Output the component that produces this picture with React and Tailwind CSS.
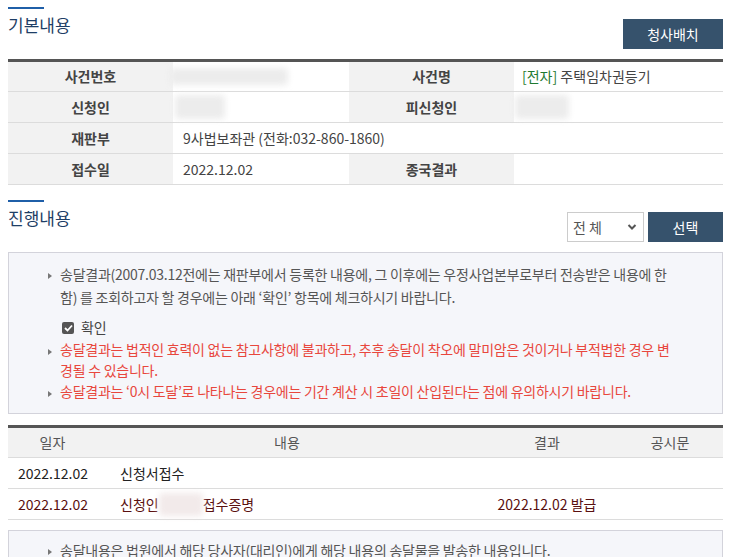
import React from 'react';

const Blur = ({ className }) => (
  <div className={`bg-[#ececec] blur-[3px] rounded ${className}`} />
);

const Bullet = () => (
  <span className="mt-[10px] mr-[8px] shrink-0 inline-block w-0 h-0 border-y-[3px] border-y-transparent border-l-[4px] border-l-[#777]" />
);

const SectionHead = ({ title, children }) => (
  <div className="flex justify-between items-start">
    <div>
      <div className="w-[36px] h-[2px] bg-[#1f5fa8]" />
      <h2 className="mt-[4px] text-[17px] leading-[24px] text-[#1e3e66]">{title}</h2>
    </div>
    <div className="mt-[12px] flex gap-[4px]">{children}</div>
  </div>
);

const Label = ({ children }) => (
  <td className="w-[165px] bg-[#f2f2f2] text-center font-bold text-[#444]">{children}</td>
);

export default function App() {
  return (
    <div className="bg-white min-h-[557px] overflow-hidden font-['Noto_Sans_CJK_KR',sans-serif] text-[14px] text-[#444]">
      <div className="w-[715px] ml-2 pt-[7px]">
        <SectionHead title="기본내용">
          <button className="w-[100px] h-[30px] bg-[#36526c] text-white text-[14px]">청사배치</button>
        </SectionHead>

        <table className="mt-[10px] w-full border-t-[3px] border-t-[#555] border-collapse">
          <tbody>
            <tr className="h-[31px] border-b border-b-[#dcdcdc]">
              <Label>사건번호</Label>
              <td className="w-[176px] pl-[10px]">
                <Blur className="w-[118px] h-[17px] -ml-[13px]" />
              </td>
              <Label>사건명</Label>
              <td className="pl-[8px]">
                <span className="text-[#1f7a30]">[전자]</span> 주택임차권등기
              </td>
            </tr>
            <tr className="h-[31px] border-b border-b-[#dcdcdc]">
              <Label>신청인</Label>
              <td className="pl-[10px]">
                <Blur className="w-[50px] h-[24px] -ml-[8px]" />
              </td>
              <Label>피신청인</Label>
              <td className="pl-[1px]">
                <Blur className="w-[54px] h-[24px]" />
              </td>
            </tr>
            <tr className="h-[31px] border-b border-b-[#dcdcdc]">
              <Label>재판부</Label>
              <td colSpan={3} className="pl-[10px]">9사법보좌관 (전화:032-860-1860)</td>
            </tr>
            <tr className="h-[31px] border-b border-b-[#dcdcdc]">
              <Label>접수일</Label>
              <td className="pl-[10px]">2022.12.02</td>
              <Label>종국결과</Label>
              <td />
            </tr>
          </tbody>
        </table>

        <div className="mt-[15px]">
          <SectionHead title="진행내용">
            <div className="w-[77px] h-[30px] border border-[#ccc] flex items-center justify-between pl-[5px] pr-[6px] text-[#555]">
              <span>전 체</span>
              <svg width="10" height="8" viewBox="0 0 10 8">
                <path d="M1.5 2 L5 5.5 L8.5 2" stroke="#555" strokeWidth="2" fill="none" />
              </svg>
            </div>
            <button className="w-[75px] h-[30px] bg-[#36526c] text-white text-[14px]">선택</button>
          </SectionHead>
        </div>

        <div className="mt-[10px] border border-[#d3d3db] bg-[#f5f6fa] pt-[10px] pb-[11px] pl-[39px] text-[#555] tracking-[-0.25px]">
          <div className="flex leading-[23px] whitespace-nowrap">
            <Bullet />
            <p>
              송달결과(2007.03.12전에는 재판부에서 등록한 내용에, 그 이후에는 우정사업본부로부터 전송받은 내용에 한
              <br />
              함) 를 조회하고자 할 경우에는 아래 ‘확인’ 항목에 체크하시기 바랍니다.
            </p>
          </div>
          <label className="mt-[7px] ml-[14px] flex items-center gap-[7px] leading-[23px] text-[#444]">
            <span className="w-[12px] h-[12px] rounded-[2px] bg-[#555] flex items-center justify-center">
              <svg width="9" height="8" viewBox="0 0 9 8">
                <path d="M1 4 L3.5 6.5 L8 1.5" stroke="white" strokeWidth="1.8" fill="none" />
              </svg>
            </span>
            확인
          </label>
          <div className="flex leading-[21px] whitespace-nowrap text-[#e8473d]">
            <Bullet />
            <p>
              송달결과는 법적인 효력이 없는 참고사항에 불과하고, 추후 송달이 착오에 말미암은 것이거나 부적법한 경우 변
              <br />
              경될 수 있습니다.
            </p>
          </div>
          <div className="flex leading-[21px] whitespace-nowrap text-[#e8473d]">
            <Bullet />
            <p>송달결과는 ‘0시 도달’로 나타나는 경우에는 기간 계산 시 초일이 산입된다는 점에 유의하시기 바랍니다.</p>
          </div>
        </div>

        <table className="mt-[11px] w-full border-t-[3px] border-t-[#555] border-collapse">
          <thead>
            <tr className="h-[31px] bg-[#f2f2f2] border-b border-b-[#dcdcdc] text-[#555]">
              <th className="w-[89px] font-normal">일자</th>
              <th className="w-[380px] font-normal">내용</th>
              <th className="w-[140px] font-normal">결과</th>
              <th className="font-normal">공시문</th>
            </tr>
          </thead>
          <tbody>
            <tr className="h-[31px] border-b border-b-[#dcdcdc] text-[#222]">
              <td className="pl-[10px]">2022.12.02</td>
              <td className="pl-[23px]">신청서접수</td>
              <td />
              <td />
            </tr>
            <tr className="h-[31px] border-b border-b-[#dcdcdc] text-[#5a1010]">
              <td className="pl-[10px]">2022.12.02</td>
              <td className="pl-[23px]">
                <div className="flex items-center">
                  <span>신청인</span>
                  <Blur className="w-[44px] h-[23px] bg-[#f2eaea]" />
                  <span>접수증명</span>
                </div>
              </td>
              <td className="text-center">2022.12.02 발급</td>
              <td />
            </tr>
          </tbody>
        </table>

        <div className="mt-[10px] border border-[#d3d3db] bg-[#f5f6fa] pt-[8px] pb-[10px] pl-[39px] text-[#555] tracking-[-0.25px]">
          <div className="flex leading-[23px] whitespace-nowrap">
            <Bullet />
            <p>송달내용은 법원에서 해당 당사자(대리인)에게 해당 내용의 송달물을 발송한 내용입니다.</p>
          </div>
        </div>
      </div>
    </div>
  );
}
